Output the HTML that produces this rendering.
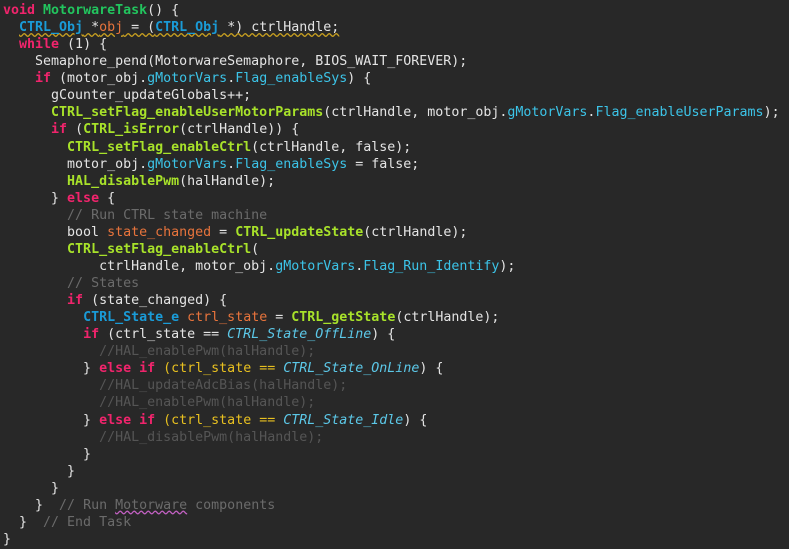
<!DOCTYPE html>
<html><head><meta charset="utf-8"><style>
html,body{margin:0;padding:0;background:#282828;width:789px;height:549px;overflow:hidden}
pre{margin:0;padding:2px 0 0 3px;font-family:"DejaVu Sans Mono","Liberation Mono",monospace;font-size:13.3px;line-height:17.06px;color:#e4e4e4}
.k{color:#f0246c;font-weight:bold}.f{color:#22c55e;font-weight:bold}.t{color:#1a9bd7;font-weight:bold}.v{color:#e8743c}
.c{color:#a8e22a;font-weight:bold}.m{color:#3cc4e8}.e{color:#5cc8e8;font-style:italic}
.cm{color:#6b6b6b}.cd{color:#555}.y{color:#e8c020}.w{text-decoration:underline wavy #c8a020}
.wp{text-decoration:underline wavy #c060c0}
</style></head><body><pre><span class="k">void</span> <span class="f">MotorwareTask</span>() {
  <span class="w"><span class="t">CTRL_Obj</span> *<span class="v">obj</span> = (<span class="t">CTRL_Obj</span> *) ctrlHandle;</span>
  <span class="k">while</span> (1) {
    Semaphore_pend(MotorwareSemaphore, BIOS_WAIT_FOREVER);
    <span class="k">if</span> (motor_obj.<span class="m">gMotorVars</span>.<span class="m">Flag_enableSys</span>) {
      gCounter_updateGlobals++;
      <span class="c">CTRL_setFlag_enableUserMotorParams</span>(ctrlHandle, motor_obj.<span class="m">gMotorVars</span>.<span class="m">Flag_enableUserParams</span>);
      <span class="k">if</span> (<span class="c">CTRL_isError</span>(ctrlHandle)) {
        <span class="c">CTRL_setFlag_enableCtrl</span>(ctrlHandle, false);
        motor_obj.<span class="m">gMotorVars</span>.<span class="m">Flag_enableSys</span> = false;
        <span class="c">HAL_disablePwm</span>(halHandle);
      } <span class="k">else</span> {
        <span class="cm">// Run CTRL state machine</span>
        bool <span class="v">state_changed</span> = <span class="c">CTRL_updateState</span>(ctrlHandle);
        <span class="c">CTRL_setFlag_enableCtrl</span>(
            ctrlHandle, motor_obj.<span class="m">gMotorVars</span>.<span class="m">Flag_Run_Identify</span>);
        <span class="cm">// States</span>
        <span class="k">if</span> (state_changed) {
          <span class="t">CTRL_State_e</span> <span class="v">ctrl_state</span> = <span class="c">CTRL_getState</span>(ctrlHandle);
          <span class="k">if</span> (ctrl_state == <span class="e">CTRL_State_OffLine</span>) {
            <span class="cd">//HAL_enablePwm(halHandle);</span>
          } <span class="k">else if</span> <span class="y">(ctrl_state ==</span> <span class="e">CTRL_State_OnLine</span>) {
            <span class="cd">//HAL_updateAdcBias(halHandle);</span>
            <span class="cd">//HAL_enablePwm(halHandle);</span>
          } <span class="k">else if</span> <span class="y">(ctrl_state ==</span> <span class="e">CTRL_State_Idle</span>) {
            <span class="cd">//HAL_disablePwm(halHandle);</span>
          }
        }
      }
    }  <span class="cm">// Run <span class="wp">Motorware</span> components</span>
  }  <span class="cm">// End Task</span>
}</pre></body></html>
